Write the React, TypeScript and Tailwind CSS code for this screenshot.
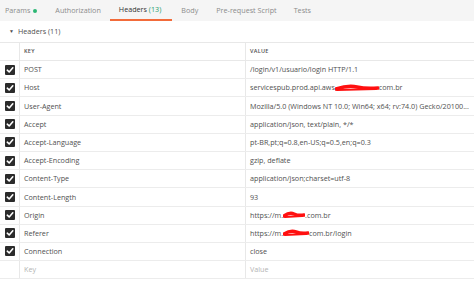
import React from "react";

const Check = () => (
  <div className="w-[10px] h-[10px] rounded-[1px] bg-[#2b2b2b] flex items-center justify-center">
    <svg width="8" height="8" viewBox="0 0 8 8">
      <path d="M1.3 4.2 L3.2 6 L6.8 1.8" stroke="#fff" strokeWidth="1.6" fill="none" strokeLinecap="round" strokeLinejoin="round" />
    </svg>
  </div>
);

const Scribble = ({ w }: { w: number }) => (
  <svg width={w} height="8" viewBox={`0 0 ${w} 8`} className="inline-block align-middle">
    <path d={`M1 5 Q ${w * 0.3} 1 ${w * 0.5} 3 T ${w - 1} 4`} stroke="#ff1010" strokeWidth="3.5" fill="none" strokeLinecap="round" />
    <path d={`M2 6 L ${w - 3} 5`} stroke="#ff1010" strokeWidth="2" fill="none" strokeLinecap="round" />
  </svg>
);

type Row = { k: string; v: React.ReactNode };

const rows: Row[] = [
  { k: "POST", v: "/login/v1/usuario/login HTTP/1.1" },
  { k: "Host", v: <>servicespub.prod.api.aws<Scribble w={44} />com.br</> },
  { k: "User-Agent", v: "Mozilla/5.0 (Windows NT 10.0; Win64; x64; rv:74.0) Gecko/20100..." },
  { k: "Accept", v: "application/json, text/plain, */*" },
  { k: "Accept-Language", v: "pt-BR,pt;q=0.8,en-US;q=0.5,en;q=0.3" },
  { k: "Accept-Encoding", v: "gzip, deflate" },
  { k: "Content-Type", v: "application/json;charset=utf-8" },
  { k: "Content-Length", v: "93" },
  { k: "Origin", v: <>https://m.<Scribble w={22} />.com.br</> },
  { k: "Referer", v: <>https://m.<Scribble w={26} />com.br/login</> },
  { k: "Connection", v: "close" },
];

export default function App() {
  return (
    <div className="w-[474px] h-[284px] bg-white overflow-hidden text-[7.2px] text-[#505050]" style={{ fontFamily: '"Open Sans", sans-serif' }}>
      <div className="h-[21px] bg-[#f5f5f5] flex items-stretch pl-[5px] text-[#8c8c8c]">
        <div className="flex items-center gap-[3px] mr-[18px]">Params<span className="w-[4px] h-[4px] rounded-full bg-[#2bb673]" /></div>
        <div className="flex items-center mr-[9px]">Authorization</div>
        <div className="flex items-center pl-[9px] pr-[11px] border-b-2 border-[#f26b3a] text-[#333] mr-[9px]">Headers&nbsp;<span className="text-[#2a9d6e]">(13)</span></div>
        <div className="flex items-center mr-[18px]">Body</div>
        <div className="flex items-center mr-[17px]">Pre-request Script</div>
        <div className="flex items-center">Tests</div>
      </div>
      <div className="h-[21px] flex items-center pl-[9px] gap-[4px] text-[#505050]">
        <span className="text-[5px]">▼</span>
        <span>Headers (11)</span>
      </div>
      <div className="border-t border-[#e8e8e8]">
        <div className="flex h-[18px] border-b border-[#e8e8e8] text-[5.5px] font-semibold text-[#505050] tracking-[0.3px]">
          <div className="w-[20px] shrink-0 border-r border-[#e8e8e8]" />
          <div className="w-[226px] shrink-0 border-r border-[#e8e8e8] flex items-center pl-[4px]">KEY</div>
          <div className="flex-1 min-w-0 flex items-center pl-[4px]">VALUE</div>
        </div>
        {rows.map((r) => (
          <div key={r.k} className="flex h-[18.2px] border-b border-[#ececec]">
            <div className="w-[20px] shrink-0 border-r border-[#e8e8e8] flex items-center justify-center"><Check /></div>
            <div className="w-[226px] shrink-0 border-r border-[#e8e8e8] flex items-center pl-[4px]">{r.k}</div>
            <div className="flex-1 min-w-0 overflow-hidden flex items-center pl-[4px] whitespace-nowrap">{r.v}</div>
          </div>
        ))}
        <div className="flex h-[18.2px] border-b border-[#ececec] text-[#b4b4b4]">
          <div className="w-[20px] shrink-0 border-r border-[#e8e8e8]" />
          <div className="w-[226px] shrink-0 border-r border-[#e8e8e8] flex items-center pl-[4px]">Key</div>
          <div className="flex-1 min-w-0 flex items-center pl-[4px]">Value</div>
        </div>
      </div>
    </div>
  );
}
